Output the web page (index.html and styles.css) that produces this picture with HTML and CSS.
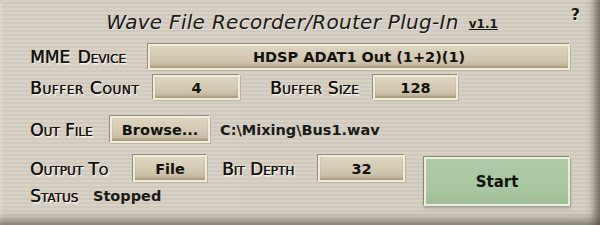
FILE: index.html
```html
<!DOCTYPE html>
<html lang="en">
<head>
    <meta charset="UTF-8">
    <meta name="viewport" content="width=device-width, initial-scale=1.0">
    <title>Wave File Recorder/Router Plug-In</title>
    <link rel="stylesheet" href="styles.css">
</head>
<body>
    <div class="plugin">
        <div class="title-bar">
            <h1 class="title">Wave File Recorder/Router Plug-In</h1>
            <span class="version">v1.1</span>
            <span class="help">?</span>
        </div>

        <div class="row row-device">
            <span class="label label-device">MME Device</span>
            <div class="field field-device">HDSP ADAT1 Out (1+2)(1)</div>
        </div>

        <div class="row row-buffer">
            <span class="label label-count">Buffer Count</span>
            <div class="field field-count">4</div>
            <span class="label label-size">Buffer Size</span>
            <div class="field field-size">128</div>
        </div>

        <div class="row row-file">
            <span class="label label-file">Out File</span>
            <button class="field field-browse">Browse...</button>
            <span class="value path">C:\Mixing\Bus1.wav</span>
        </div>

        <div class="bottom">
            <div class="bottom-left">
                <div class="row row-output">
                    <span class="label label-output">Output To</span>
                    <div class="field field-output">File</div>
                    <span class="label label-depth">Bit Depth</span>
                    <div class="field field-depth">32</div>
                </div>
                <div class="row row-status">
                    <span class="label label-status">Status</span>
                    <span class="value">Stopped</span>
                </div>
            </div>
            <button class="start-btn">Start</button>
        </div>
    </div>
</body>
</html>
```

FILE: styles.css
```css
body {
    margin: 0;
    padding: 0;
    font-family: "DejaVu Sans", Verdana, sans-serif;
}

.plugin {
    position: relative;
    box-sizing: border-box;
    width: 600px;
    height: 225px;
    padding: 0 30px 0 30px;
    color: #1c1b16;
    background:
        repeating-linear-gradient(to bottom, rgba(255, 255, 255, 0.05) 0, rgba(255, 255, 255, 0.05) 2px, rgba(0, 0, 0, 0.025) 2px, rgba(0, 0, 0, 0.025) 4px),
        linear-gradient(to right, #dcd7cb 0, #d5cfc3 6px, #d4cec2 100%);
    box-shadow:
        inset -6px 0 6px -2px rgba(60, 55, 45, 0.35),
        inset -14px 0 10px -8px rgba(60, 55, 45, 0.4),
        inset 0 -10px 8px -4px rgba(60, 55, 45, 0.45),
        inset 2px 2px 0 rgba(255, 255, 255, 0.3);
    overflow: hidden;
}

/* Title */
.title-bar {
    position: relative;
    height: 44px;
    display: flex;
    justify-content: center;
    align-items: center;
    gap: 10px;
    padding-left: 4px;
}

.title {
    margin: 0;
    font-size: 20px;
    font-weight: normal;
    font-style: italic;
    letter-spacing: 0.3px;
    color: #1a1a16;
    text-shadow: 1px 1px 0 rgba(255, 255, 255, 0.45);
}

.version {
    font-size: 12px;
    font-weight: bold;
    text-decoration: underline;
    margin-top: 3px;
}

.help {
    position: absolute;
    right: -10px;
    top: 5px;
    font-size: 16px;
    font-weight: bold;
    color: #1a1a16;
    text-shadow: 1px 1px 0 #f5f2e8;
}

/* Rows */
.row {
    display: flex;
    align-items: center;
}

.row-device {
    height: 26px;
}

.row-buffer {
    height: 25px;
    margin-top: 5px;
}

.row-file {
    height: 27px;
    margin-top: 16px;
}

.label {
    font-size: 17px;
    font-variant: small-caps;
    white-space: nowrap;
    color: #151410;
    text-shadow: 0.4px 0 0 #151410, 1px 1px 0 #f6f2e6, 1.5px 1.5px 0 rgba(246, 242, 230, 0.6);
}

.label-device { width: 118px; word-spacing: 2px; }
.label-count { width: 123px; letter-spacing: 0.6px; }
.label-size { width: 103px; margin-left: 30px; letter-spacing: 0.3px; }
.label-file { width: 80px; }
.label-output { width: 103px; }
.label-depth { width: 96px; margin-left: 15px; }
.label-status { width: 63px; }

.field {
    box-sizing: border-box;
    height: 100%;
    display: flex;
    align-items: center;
    justify-content: center;
    font-family: "DejaVu Sans", Verdana, sans-serif;
    font-size: 14.5px;
    font-weight: bold;
    color: #121210;
    background: linear-gradient(to bottom, #ddd5c1 0, #d2c8b1 60%, #c0b498 100%);
    border: 2px solid #f1ecda;
    box-shadow: -1px -1px 0 #948c7c, 1px 1px 0 #bbb3a3, inset 0 -2px 2px rgba(90, 80, 60, 0.25);
    padding: 0;
}

.field-device { flex: 1; }
.field-count { width: 87px; }
.field-size { width: 85px; }
.field-browse { width: 100px; }
.field-output { width: 74px; }
.field-depth { width: 87px; }

.value {
    font-size: 14.5px;
    font-weight: bold;
    white-space: nowrap;
}

.path {
    margin-left: 10px;
}

/* Bottom area */
.bottom {
    display: flex;
    margin-top: 12px;
}

.bottom-left {
    width: 394px;
}

.row-output {
    height: 27px;
}

.row-status {
    height: 22px;
    margin-top: 3px;
}

.start-btn {
    box-sizing: border-box;
    width: 146px;
    height: 49px;
    margin-top: 2px;
    font-family: "DejaVu Sans", Verdana, sans-serif;
    font-size: 15px;
    font-weight: bold;
    color: #121210;
    background: linear-gradient(to bottom, #adcba6 0, #a8c7a1 70%, #9ebd97 100%);
    border: 2px solid #e8efdc;
    box-shadow: -1px -1px 0 #8c8676, 1px 1px 0 #a8a292, 0 2px 3px rgba(60, 55, 45, 0.3);
    cursor: pointer;
}
```
